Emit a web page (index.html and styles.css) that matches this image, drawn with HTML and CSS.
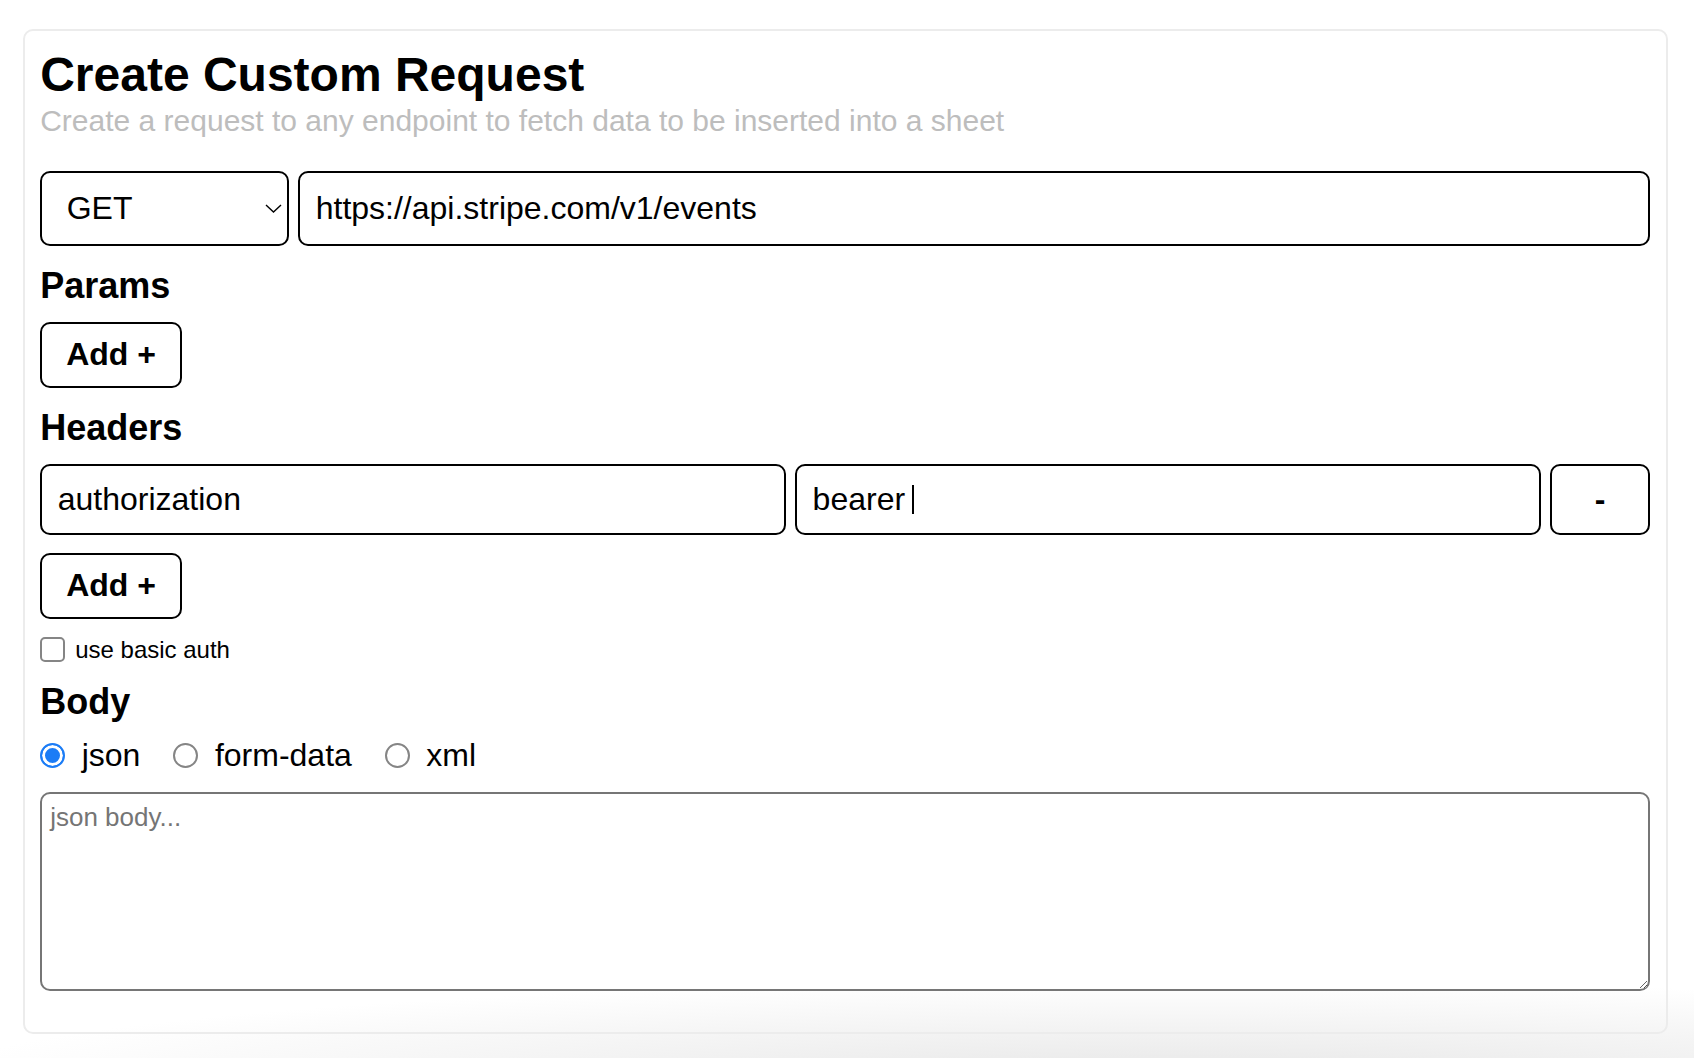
FILE: index.html
```html
<!DOCTYPE html>
<html lang="en">
<head>
<meta charset="utf-8">
<title>Create Custom Request</title>
<link rel="stylesheet" href="styles.css">
</head>
<body>
<div class="page">
  <div class="card">
    <h1 class="title">Create Custom Request</h1>
    <p class="subtitle">Create a request to any endpoint to fetch data to be inserted into a sheet</p>

    <div class="request-row">
      <div class="method">
        <select class="method-select">
          <option>GET</option>
          <option>POST</option>
          <option>PUT</option>
          <option>DELETE</option>
        </select>
        <svg class="chevron" width="17" height="9" viewBox="0 0 17 9" aria-hidden="true">
          <path d="M1 1 L8.5 8 L16 1" fill="none" stroke="#000" stroke-width="1.4"/>
        </svg>
      </div>
      <input class="field url" type="text" value="https://api.stripe.com/v1/events">
    </div>

    <h2 class="section-title">Params</h2>
    <button class="btn add" type="button">Add +</button>

    <h2 class="section-title headers-title">Headers</h2>
    <div class="header-row">
      <div class="cell">
        <input class="field kv" type="text" value="authorization">
      </div>
      <div class="cell">
        <input class="field kv" type="text" value="bearer">
        <span class="caret"></span>
      </div>
      <button class="btn remove" type="button">-</button>
    </div>
    <button class="btn add add-header" type="button">Add +</button>

    <label class="check-row"><input class="check" type="checkbox"><span>use basic auth</span></label>

    <h2 class="section-title body-title">Body</h2>
    <div class="radio-row">
      <label class="radio-label"><input class="radio" type="radio" name="bodytype" checked><span>json</span></label>
      <label class="radio-label"><input class="radio" type="radio" name="bodytype"><span>form-data</span></label>
      <label class="radio-label"><input class="radio" type="radio" name="bodytype"><span>xml</span></label>
    </div>

    <textarea class="body-input" placeholder="json body..."></textarea>
  </div>
</div>
</body>
</html>
```

FILE: styles.css
```css
* {
  box-sizing: border-box;
}

html, body {
  margin: 0;
  padding: 0;
}

body {
  min-height: 100vh;
  font-family: "Liberation Sans", Arial, sans-serif;
  color: #000;
  background:
    radial-gradient(ellipse 1250px 100px at 1180px 1080px, #e6e6e6 0%, #efefef 35%, rgba(255,255,255,0) 100%),
    #ffffff;
}

.page {
  padding: 29px 26.5px 26px 22.7px;
}

.card {
  display: flex;
  flex-direction: column;
  border: 2px solid #ececec;
  border-radius: 10px;
  padding: 15.5px;
  background: transparent;
}

.title {
  margin: 0;
  font-size: 48px;
  line-height: 56px;
  font-weight: 700;
}

.subtitle {
  margin: 1px 0 0;
  font-size: 30px;
  line-height: 34px;
  color: #bdbdbd;
}

.request-row {
  display: flex;
  gap: 9px;
  height: 75px;
  margin-top: 33px;
}

.method {
  position: relative;
  width: 249px;
  flex: none;
}

.method-select {
  -webkit-appearance: none;
  appearance: none;
  width: 100%;
  height: 100%;
  border: 2px solid #000;
  border-radius: 10px;
  background: #fff;
  padding: 0 30px 0 24.5px;
  font-family: inherit;
  font-size: 32px;
  color: #000;
  outline: none;
}

.chevron {
  position: absolute;
  right: 7px;
  top: 33px;
  pointer-events: none;
}

.field {
  height: 100%;
  border: 2px solid #000;
  border-radius: 10px;
  background: #fff;
  padding: 0 15.5px;
  font-family: inherit;
  font-size: 32px;
  color: #000;
  outline: none;
  min-width: 0;
}

.url {
  flex: 1;
}

.section-title {
  margin: 20px 0 16px;
  font-size: 36px;
  line-height: 40px;
  font-weight: 700;
}

.headers-title {
  margin-top: 20px;
}

.body-title {
  margin: 18px 0 14px;
}

.btn {
  border: 2px solid #000;
  border-radius: 10px;
  background: #fff;
  font-family: inherit;
  font-size: 32px;
  font-weight: 700;
  color: #000;
  cursor: pointer;
}

.add {
  align-self: flex-start;
  height: 66px;
  padding: 0 24px;
}

.add-header {
  margin-top: 18px;
}

.header-row {
  display: grid;
  grid-template-columns: minmax(0, 1fr) minmax(0, 1fr) 100px;
  gap: 9.5px;
  height: 71px;
}

.cell {
  position: relative;
  display: flex;
  min-width: 0;
}

.cell .kv {
  width: 100%;
}

.caret {
  position: absolute;
  left: 117px;
  top: 21px;
  width: 1.5px;
  height: 29px;
  background: #000;
}

.remove {
  padding: 0;
}

.check-row {
  display: flex;
  align-items: center;
  gap: 10px;
  height: 28px;
  margin-top: 17px;
  font-size: 24px;
  align-self: flex-start;
}

.check {
  -webkit-appearance: none;
  appearance: none;
  width: 25px;
  height: 25px;
  margin: 0;
  border: 2px solid #858585;
  border-radius: 5px;
  background: #fff;
}

.radio-row {
  display: flex;
  align-items: center;
  gap: 33px;
  height: 40px;
  font-size: 32px;
}

.radio-label {
  display: flex;
  align-items: center;
  gap: 16.5px;
}

.radio {
  -webkit-appearance: none;
  appearance: none;
  width: 25px;
  height: 25px;
  margin: 0;
  border: 2px solid #858585;
  border-radius: 50%;
  background: #fff;
}

.radio:checked {
  border: 2.5px solid #1b7cf6;
  background: #1b7cf6;
  box-shadow: inset 0 0 0 3px #fff;
}

.body-input {
  margin: 16px 0 26px;
  height: 199px;
  border: 2px solid #767676;
  border-radius: 10px;
  padding: 8px;
  font-family: inherit;
  font-size: 26px;
  color: #000;
  background: #fff;
  outline: none;
  resize: vertical;
}

.body-input::placeholder {
  color: #757575;
}
```
